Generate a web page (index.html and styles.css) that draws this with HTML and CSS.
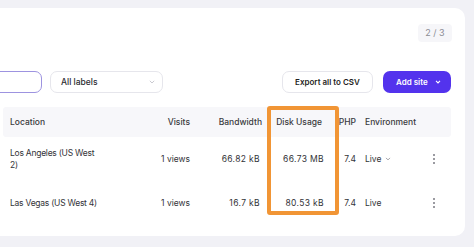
FILE: index.html
```html
<!DOCTYPE html>
<html lang="en">
<head>
    <meta charset="UTF-8">
    <meta name="viewport" content="width=device-width, initial-scale=1.0">
    <title>Sites</title>
    <link rel="stylesheet" href="styles.css">
</head>
<body>
    <div class="card">
        <div class="pager">
            <span class="page-count">2 / 3</span>
        </div>

        <div class="toolbar">
            <input type="text" class="search">
            <div class="select">
                <span>All labels</span>
                <svg class="chev" width="6" height="4" viewBox="0 0 6 4"><path d="M0.8 0.8 L3 3 L5.2 0.8" fill="none" stroke="#c4c4cc" stroke-width="0.9"/></svg>
            </div>
            <div class="spacer"></div>
            <button class="btn btn-light">Export all to CSV</button>
            <button class="btn btn-primary">
                <span>Add site</span>
                <svg width="6" height="4" viewBox="0 0 6 4"><path d="M1 0.9 L3 2.9 L5 0.9" fill="none" stroke="#ffffff" stroke-width="1.1"/></svg>
            </button>
        </div>

        <div class="table-wrap">
            <div class="row head">
                <div class="cell loc">Location</div>
                <div class="cell num">Visits</div>
                <div class="cell num">Bandwidth</div>
                <div class="cell num disk">Disk Usage</div>
                <div class="cell num">PHP</div>
                <div class="cell env">Environment</div>
                <div class="cell"></div>
            </div>
            <div class="row">
                <div class="cell loc"><span class="loc-text">Los Angeles (US West 2)</span></div>
                <div class="cell num">1 views</div>
                <div class="cell num val">66.82 kB</div>
                <div class="cell num val">66.73 MB</div>
                <div class="cell num">7.4</div>
                <div class="cell env">Live
                    <svg class="env-chev" width="6" height="4" viewBox="0 0 6 4"><path d="M1 0.9 L3 2.9 L5 0.9" fill="none" stroke="#8a8a92" stroke-width="0.8"/></svg>
                </div>
                <div class="cell menu"><span class="kebab"><i></i><i></i><i></i></span></div>
            </div>
            <div class="row">
                <div class="cell loc"><span class="loc-text">Las Vegas (US West 4)</span></div>
                <div class="cell num">1 views</div>
                <div class="cell num val">16.7 kB</div>
                <div class="cell num val">80.53 kB</div>
                <div class="cell num">7.4</div>
                <div class="cell env">Live</div>
                <div class="cell menu"><span class="kebab"><i></i><i></i><i></i></span></div>
            </div>
            <!-- rama wokół kolumny Disk Usage -->
            <div class="highlight"></div>
        </div>
    </div>
</body>
</html>
```

FILE: styles.css
```css
body {
    margin: 0;
    background-color: #f1f1f6;
    font-family: Inter, "Noto Sans", sans-serif;
    font-size: 8.5px;
    color: #2b2b30;
    overflow: hidden;
}
.card {
    margin: 8px 9px 0 -11px;
    padding: 16px 14px 11px 14px;
    background-color: #ffffff;
    border-radius: 10px;
}
.pager {
    display: flex;
    justify-content: flex-end;
    margin-right: -1px;
}
.page-count {
    width: 34px;
    height: 18px;
    line-height: 18px;
    text-align: center;
    background-color: #f6f6f9;
    color: #8c8c94;
    border-radius: 4px;
    font-size: 9px;
}
.toolbar {
    display: flex;
    align-items: center;
    margin-top: 29px;
    height: 22px;
}
.search {
    box-sizing: border-box;
    width: 50px;
    height: 22px;
    margin: 0 0 0 -11px;
    border: 1px solid #9d93e0;
    border-radius: 7px;
    background-color: #ffffff;
    padding: 0;
}
.select {
    box-sizing: border-box;
    display: flex;
    align-items: center;
    justify-content: space-between;
    width: 113px;
    height: 22px;
    margin-left: 8px;
    padding: 0 7px 0 10px;
    border: 1px solid #e6e6ec;
    border-radius: 7px;
    font-weight: 500;
    color: #2b2b30;
}
.spacer {
    flex: 1;
}
.btn {
    box-sizing: border-box;
    height: 22px;
    border-radius: 7px;
    font-family: inherit;
    font-size: 8px;
    font-weight: 600;
    padding: 0;
    cursor: pointer;
}
.btn-light {
    width: 91px;
    margin-right: 10px;
    background-color: #ffffff;
    border: 1px solid #e6e6ec;
    color: #1f1f24;
}
.btn-primary {
    display: flex;
    align-items: center;
    gap: 7px;
    width: 68px;
    padding-left: 13px;
    background-color: #5333ed;
    border: none;
    color: #ffffff;
}
.table-wrap {
    position: relative;
    margin-top: 14px;
}
.row {
    display: grid;
    grid-template-columns: 137px 50px 72px 64px 30px 64px 31px;
    height: 44px;
    align-items: center;
    color: #333338;
}
.row.head {
    height: 30px;
    background-color: #f7f7fa;
    border-radius: 3px;
    font-weight: 500;
    color: #3a3a40;
}
.cell {
    white-space: nowrap;
}
.cell.loc {
    padding-left: 7px;
}
.loc-text {
    display: block;
    width: 90px;
    white-space: normal;
    line-height: 12px;
    letter-spacing: -0.25px;
}
.cell.num {
    text-align: right;
}
.cell.val {
    letter-spacing: 0.35px;
    padding-right: 2px;
}
.head .disk {
    padding-right: 4px;
}
.cell.env {
    display: flex;
    align-items: center;
    gap: 4px;
    padding-left: 9px;
}
.cell.menu {
    display: flex;
    justify-content: center;
    padding-right: 3px;
}
.kebab {
    display: flex;
    flex-direction: column;
    gap: 2px;
}
.kebab i {
    display: block;
    width: 2px;
    height: 2px;
    border-radius: 50%;
    background-color: #7a7a82;
}
.highlight {
    position: absolute;
    top: -1px;
    left: 264px;
    width: 72px;
    height: 109px;
    box-sizing: border-box;
    border: 4px solid #f19535;
    border-radius: 3px;
}
```
